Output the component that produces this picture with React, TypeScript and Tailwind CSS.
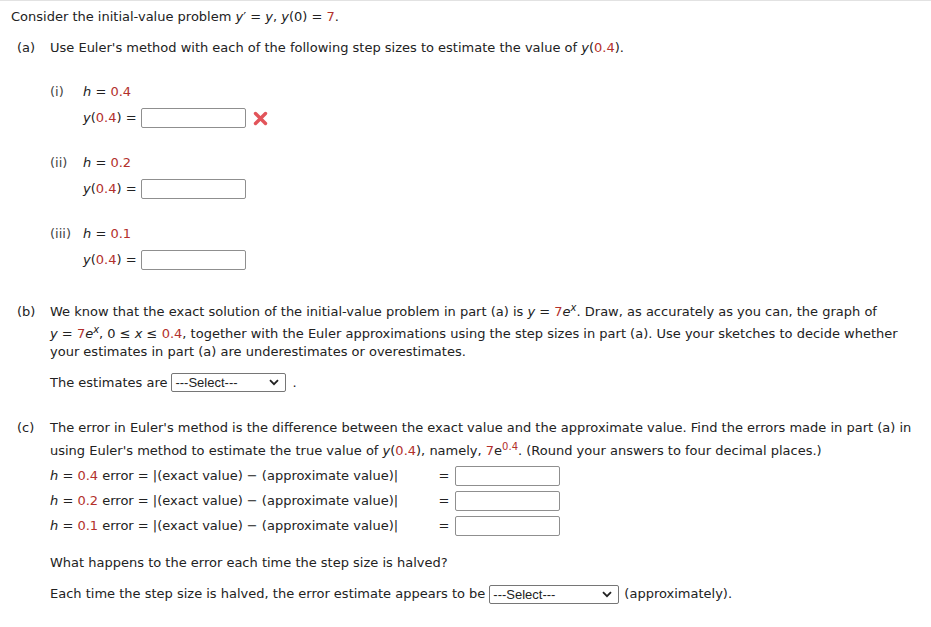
import React from 'react'

const red = 'text-[#b3302c]'

function Num({ children }: { children: React.ReactNode }) {
  return <span className={red}>{children}</span>
}

function V({ children }: { children: React.ReactNode }) {
  return <i>{children}</i>
}

function Box({ w = 'w-[105px]' }: { w?: string }) {
  return <input type="text" className={`${w} h-[20px] rounded-[2px] border border-[#8f8f8f] bg-white px-1 outline-none`} />
}

function Select({ w }: { w: string }) {
  return (
    <span className={`relative inline-flex ${w} h-[19px]`}>
      <select className="h-full w-full appearance-none rounded-[2px] border border-[#767676] bg-white pl-[3px] text-[13px] leading-[17px] text-[#222] [font-family:'Liberation_Sans',Arial,sans-serif]">
        <option>---Select---</option>
      </select>
      <svg className="pointer-events-none absolute right-[7px] top-[6px]" width="10" height="7" viewBox="0 0 10 7">
        <path d="M1 1.2 5 5.2 9 1.2" fill="none" stroke="#222" strokeWidth="1.8" />
      </svg>
    </span>
  )
}

function WrongMark() {
  return (
    <svg width="15" height="15" viewBox="0 0 15 15" className="ml-[7px]">
      <path d="M2.5 2.5 12.5 12.5 M12.5 2.5 2.5 12.5" stroke="#e2545a" strokeWidth="3.4" strokeLinecap="round" />
    </svg>
  )
}

function StepItem({ label, h, first = false, mark = false }: { label: string; h: string; first?: boolean; mark?: boolean }) {
  return (
    <div className={first ? 'mt-[26px]' : 'mt-[25px]'}>
      <div className="flex h-[18px] items-center">
        <span className="w-[33px] text-[#444]">{label}</span>
        <span>
          <V>h</V> = <Num>{h}</Num>
        </span>
      </div>
      <div className="mt-[6px] flex h-[22px] items-center pl-[33px]">
        <span className="mr-[4px]">
          <V>y</V>(<Num>0.4</Num>) =
        </span>
        <Box />
        {mark && <WrongMark />}
      </div>
    </div>
  )
}

function ErrorRow({ h }: { h: string }) {
  return (
    <div className="flex h-[25px] items-center">
      <span className="w-[383px] whitespace-nowrap">
        <V>h</V> = <Num>{h}</Num> error = |(exact value) − (approximate value)|
      </span>
      <span className="w-[22px] text-center">=</span>
      <Box />
    </div>
  )
}

export default function App() {
  return (
    <div className="min-h-screen bg-white text-[13px] leading-[18px] text-[#222] [font-family:'DejaVu_Sans',Verdana,sans-serif]">
      <div className="border-t border-[#e2e2e2] px-[11px] pt-[7px] pb-6">
        <p className="h-[18px] whitespace-nowrap">
          Consider the initial-value problem <V>y</V>′ = <V>y</V>, <V>y</V>(0) = <Num>7</Num>.
        </p>

        {/* part (a) */}
        <div className="mt-[13px] flex pl-[6px]">
          <span className="w-[33px] shrink-0">(a)</span>
          <div>
            <p className="h-[18px] whitespace-nowrap">
              Use Euler's method with each of the following step sizes to estimate the value of <V>y</V>(<Num>0.4</Num>).
            </p>
            <StepItem label="(i)" h="0.4" first mark />
            <StepItem label="(ii)" h="0.2" />
            <StepItem label="(iii)" h="0.1" />
          </div>
        </div>

        {/* part (b) */}
        <div className="mt-[32px] flex pl-[6px]">
          <span className="w-[33px] shrink-0">(b)</span>
          <div>
            <p className="h-[18px] whitespace-nowrap">
              We know that the exact solution of the initial-value problem in part (a) is <V>y</V> = <Num>7</Num>
              <V>e</V>
              <sup className="text-[10px]"><V>x</V></sup>. Draw, as accurately as you can, the graph of
            </p>
            <p className="mt-[4px] h-[18px] whitespace-nowrap">
              <V>y</V> = <Num>7</Num>
              <V>e</V>
              <sup className="text-[10px]"><V>x</V></sup>, 0 ≤ <V>x</V> ≤ <Num>0.4</Num>, together with the Euler approximations using the step sizes in part (a). Use your sketches to decide whether
            </p>
            <p className="h-[18px] whitespace-nowrap">your estimates in part (a) are underestimates or overestimates.</p>
            <div className="mt-[12px] flex h-[19px] items-center">
              <span className="mr-[4px]">The estimates are</span>
              <Select w="w-[115px]" />
              <span className="ml-[6px]">.</span>
            </div>
          </div>
        </div>

        {/* part (c) */}
        <div className="mt-[27px] flex pl-[6px]">
          <span className="w-[33px] shrink-0">(c)</span>
          <div>
            <p className="h-[18px] whitespace-nowrap">
              The error in Euler's method is the difference between the exact value and the approximate value. Find the errors made in part (a) in
            </p>
            <p className="mt-[5px] h-[18px] whitespace-nowrap">
              using Euler's method to estimate the true value of <V>y</V>(<Num>0.4</Num>), namely, <Num>7</Num>e
              <sup className="text-[10px]"><Num>0.4</Num></sup>. (Round your answers to four decimal places.)
            </p>
            <div className="mt-[3px]">
              <ErrorRow h="0.4" />
              <ErrorRow h="0.2" />
              <ErrorRow h="0.1" />
            </div>
            <p className="mt-[16px] h-[18px] whitespace-nowrap">What happens to the error each time the step size is halved?</p>
            <div className="mt-[12px] flex h-[20px] items-center whitespace-nowrap">
              <span className="mr-[4px]">Each time the step size is halved, the error estimate appears to be</span>
              <Select w="w-[130px]" />
              <span className="ml-[5px]">(approximately).</span>
            </div>
          </div>
        </div>
      </div>
    </div>
  )
}
